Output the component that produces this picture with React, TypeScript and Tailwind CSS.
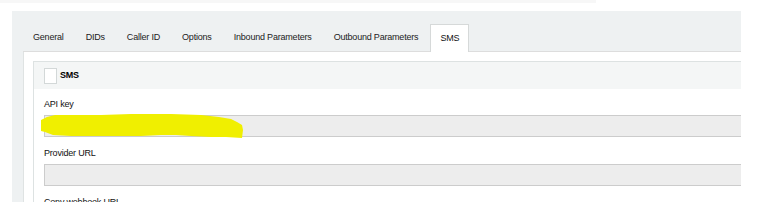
import React from "react";

const tabs = [
  "General",
  "DIDs",
  "Caller ID",
  "Options",
  "Inbound Parameters",
  "Outbound Parameters",
  "SMS",
];

function Field({ label, first, redacted }: { label: string; first?: boolean; redacted?: boolean }) {
  return (
    <div className={first ? "mt-[7px]" : "mt-[8px]"}>
      <div className="h-[16px] leading-[16px] text-[9px] tracking-[-0.2px] text-[#111]">{label}</div>
      <div className="relative mt-[3px] h-[22px] w-[760px] border border-[#cccccc] bg-[#ededed]">
        {redacted && (
          <svg
            className="absolute left-[-4px] top-[-2px]"
            width="204"
            height="25"
            viewBox="0 0 204 25"
          >
            <path
              d="M0 6 L6 3 L14 1 L60 1 L90 0 L130 0 L160 1 L178 3 L190 5 L196 8 L201 11 L202 16 L201 24 L185 23 L170 23 L150 22 L135 21 L120 21 L100 22 L80 22 L60 22 L30 22 L12 21 L4 18 L0 17 Z"
              fill="#f0ef00"
            />
          </svg>
        )}
      </div>
    </div>
  );
}

export default function App() {
  return (
    <div
      className="relative h-[219px] w-[784px] overflow-hidden bg-white"
      style={{ fontFamily: '"Liberation Sans", Arial, sans-serif' }}
    >
      <div className="h-[3px] w-[596px] bg-[#f7f7f7]" />
      <div className="ml-[12px] mt-[8px] h-[191px] w-[729px] overflow-hidden bg-[#eef1f2] pl-[11px] pt-[13px]">
        <div className="flex h-[28px] w-[760px] items-stretch gap-[2px] border-b border-[#dddddd]">
          {tabs.map((t) => (
            <div
              key={t}
              className={
                t === "SMS"
                  ? "-mb-px flex items-center border border-b-0 border-[#d6d9d9] bg-white px-[9px] pt-[1px] text-[9px] tracking-[-0.2px] text-[#111]"
                  : "flex items-center px-[10px] pt-[1px] text-[9px] tracking-[-0.2px] text-[#222]"
              }
            >
              {t}
            </div>
          ))}
        </div>
        <div className="w-[760px] border-l border-[#dfe3e3] bg-white pl-[9px] pt-[9px]">
          <div className="border-l border-t border-[#dde2e2]">
            <div className="flex h-[27px] items-center bg-[#f4f6f6] pl-[10px]">
              <div className="h-[16px] w-[13px] border border-[#d3d8d8] bg-white" />
              <span className="ml-[3px] text-[9px] font-bold tracking-[-0.3px] text-black">SMS</span>
            </div>
            <div className="pl-[10px]">
              <Field label="API key" first redacted />
              <Field label="Provider URL" />
              <Field label="Conv webhook URL" />
            </div>
          </div>
        </div>
      </div>
    </div>
  );
}
